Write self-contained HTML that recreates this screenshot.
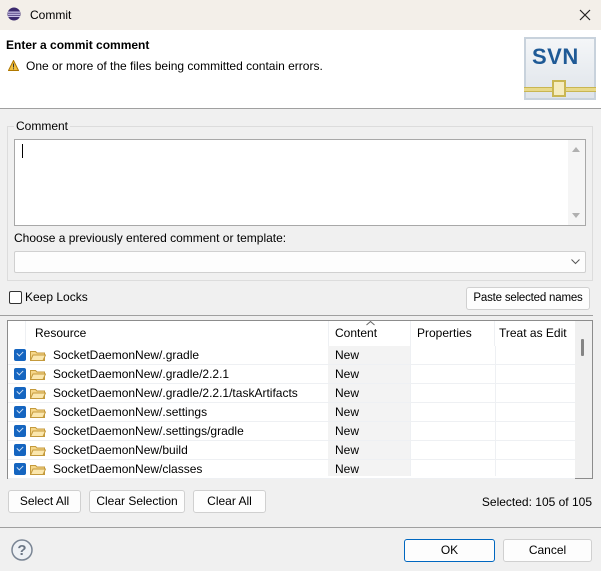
<!DOCTYPE html>
<html><head><meta charset="utf-8"><style>
*{box-sizing:border-box;margin:0;padding:0}
body{width:601px;height:571px;background:#f0f0f0;font-family:"Liberation Sans","Noto Sans CJK KR",sans-serif;font-size:12px;color:#000;position:relative;overflow:hidden}
.a{position:absolute}
.btn{position:absolute;background:#fdfdfd;border:1px solid #d0d0d0;border-radius:3px;text-align:center;line-height:21px;font-size:12px;white-space:nowrap}
.row{position:absolute;left:8px;width:567px;height:19px;border-bottom:1px solid #eef0f3}
.cb{position:absolute;left:6px;top:3px;width:12px;height:12px;background:#1565c0;border-radius:2px}
.cb:after{content:"";position:absolute;left:3px;top:2px;width:5px;height:3px;border-left:1.2px solid #cfe0f5;border-bottom:1.2px solid #cfe0f5;transform:rotate(-45deg)}
.fd{position:absolute;left:22px;top:4px;width:16px;height:11px}
.nm{position:absolute;left:45px;top:2px}
.ct{position:absolute;left:320px;top:0;width:82px;height:18px;background:#f3f3f3;padding:2px 0 0 7px}
.vl{position:absolute;top:0;width:1px;height:18px;background:#eef0f3}
</style></head><body>
<div class="a" style="left:0;top:0;width:601px;height:30px;background:#f3efe9"></div>
<svg class="a" style="left:7px;top:7px" width="14" height="14"><circle cx="7" cy="7" r="6.5" fill="#3b2a6e"/><rect x="1" y="4.5" width="12" height="1.3" fill="#c9c0e6"/><rect x="1" y="6.6" width="12" height="1.3" fill="#c9c0e6"/><rect x="1" y="8.7" width="12" height="1.3" fill="#c9c0e6"/></svg>
<div class="a" style="left:30px;top:8px;font-size:12px">Commit</div>
<svg class="a" style="left:579px;top:9px" width="12" height="12"><path d="M1 1L11 11M11 1L1 11" stroke="#222" stroke-width="1.2"/></svg>
<div class="a" style="left:0;top:30px;width:601px;height:79px;background:#fff;border-bottom:1px solid #a0a0a0"></div>
<div class="a" style="left:6px;top:38px;font-weight:bold;font-size:12px">Enter a commit comment</div>
<svg class="a" style="left:8px;top:60px" width="11" height="11"><path d="M5.5 0.5L10.5 10.5H0.5Z" fill="#f0c040" stroke="#b07800"/><rect x="5" y="3.5" width="1" height="4" fill="#333"/><rect x="5" y="8.3" width="1" height="1" fill="#333"/></svg>
<div class="a" style="left:26px;top:59px">One or more of the files being committed contain errors.</div>
<div class="a" style="left:524px;top:37px;width:72px;height:63px;background:linear-gradient(#f4f6f8,#dfe4ea);border:2px solid #c8d2dc"></div>
<div class="a" style="left:532px;top:44px;color:#1f5a96;font-weight:bold;font-size:22px;letter-spacing:0.5px">SVN</div>
<div class="a" style="left:524px;top:87px;width:72px;height:5px;background:#e8d98a;border-top:1px solid #c9b652;border-bottom:1px solid #c9b652"></div>
<div class="a" style="left:552px;top:80px;width:14px;height:17px;background:#f5ecc0;border:2px solid #c9b652"></div>

<div class="a" style="left:7px;top:126px;width:586px;height:155px;border:1px solid #dcdcdc"></div>
<div class="a" style="left:14px;top:119px;background:#f0f0f0;padding:0 2px">Comment</div>
<div class="a" style="left:14px;top:139px;width:572px;height:87px;background:#fff;border:1px solid #a8a8a8"></div>
<div class="a" style="left:22px;top:144px;width:1px;height:14px;background:#000"></div>
<div class="a" style="left:568px;top:140px;width:17px;height:85px;background:#f5f5f5"></div>
<div class="a" style="left:572px;top:147px;width:0;height:0;border:4px solid transparent;border-bottom:5px solid #b0b0b0;border-top:0"></div>
<div class="a" style="left:572px;top:213px;width:0;height:0;border:4px solid transparent;border-top:5px solid #b0b0b0;border-bottom:0"></div>
<div class="a" style="left:14px;top:231px">Choose a previously entered comment or template:</div>
<div class="a" style="left:14px;top:251px;width:572px;height:22px;background:#fdfdfd;border:1px solid #d0d0d0;border-radius:2px"></div>
<svg class="a" style="left:571px;top:259px" width="9" height="6"><path d="M0.5 0.5L4.5 4.5L8.5 0.5" fill="none" stroke="#555"/></svg>

<div class="a" style="left:9px;top:291px;width:13px;height:13px;border:1px solid #333;border-radius:2px;background:#fff"></div>
<div class="a" style="left:25px;top:290px">Keep Locks</div>
<div class="btn" style="left:466px;top:287px;width:124px;height:23px;font-size:11.5px;letter-spacing:-0.2px">Paste selected names</div>
<div class="a" style="left:0;top:315px;width:593px;height:1px;background:#a0a0a0"></div>

<div class="a" style="left:7px;top:320px;width:586px;height:159px;background:#fff;border:1px solid #8c8c8c"></div>
<div class="a" style="left:25px;top:321px;width:1px;height:25px;background:#eef0f3"></div>
<div class="a" style="left:35px;top:326px">Resource</div>
<div class="a" style="left:328px;top:321px;width:1px;height:25px;background:#eef0f3"></div>
<div class="a" style="left:335px;top:326px">Content</div>
<svg class="a" style="left:366px;top:321px" width="9" height="5"><path d="M0.5 4L4.5 0.5L8.5 4" fill="none" stroke="#666"/></svg>
<div class="a" style="left:410px;top:321px;width:1px;height:25px;background:#eef0f3"></div>
<div class="a" style="left:417px;top:326px">Properties</div>
<div class="a" style="left:494px;top:321px;width:1px;height:25px;background:#eef0f3"></div>
<div class="a" style="left:499px;top:326px">Treat as Edit</div>
<div class="a" style="left:575px;top:321px;width:17px;height:157px;background:#f0f0f0"></div>
<div class="a" style="left:581px;top:339px;width:3px;height:17px;background:#858585;border-radius:1px"></div>

<div id="rows"></div>
<script>
var n=["SocketDaemonNew/.gradle","SocketDaemonNew/.gradle/2.2.1","SocketDaemonNew/.gradle/2.2.1/taskArtifacts","SocketDaemonNew/.settings","SocketDaemonNew/.settings/gradle","SocketDaemonNew/build","SocketDaemonNew/classes"];
var h="";for(var i=0;i<7;i++){var t=346+i*19;h+='<div class="row" style="top:'+t+'px"><div class="cb"></div><svg class="fd" viewBox="0 0 16 11"><path d="M0.5 1.5H5.5L7 3H14.5V10.5H0.5Z" fill="#f6d78a" stroke="#c49a3c"/><path d="M0.5 10.5L3 5H15.5L13 10.5Z" fill="#fbe7ae" stroke="#c49a3c"/></svg><div class="nm">'+n[i]+'</div><div class="ct">New</div><div class="vl" style="left:402px"></div><div class="vl" style="left:487px"></div></div>';}
document.getElementById("rows").innerHTML=h;
</script>
<div class="a" style="left:8px;top:476px;width:567px;height:2px;background:#fff"></div>

<div class="btn" style="left:8px;top:490px;width:73px;height:23px">Select All</div>
<div class="btn" style="left:89px;top:490px;width:96px;height:23px">Clear Selection</div>
<div class="btn" style="left:193px;top:490px;width:73px;height:23px">Clear All</div>
<div class="a" style="right:9px;top:495px">Selected: 105 of 105</div>
<div class="a" style="left:0;top:527px;width:601px;height:1px;background:#a0a0a0"></div>
<svg class="a" style="left:11px;top:539px" width="22" height="22"><circle cx="11" cy="11" r="10" fill="#eef1f5" stroke="#7a8594" stroke-width="1.5"/><text x="11" y="16" font-family="Liberation Sans" font-size="15" font-weight="bold" fill="#6a7584" text-anchor="middle">?</text></svg>
<div class="btn" style="left:404px;top:539px;width:91px;height:23px;border:1px solid #0067c0">OK</div>
<div class="btn" style="left:503px;top:539px;width:89px;height:23px">Cancel</div>
</body></html>
